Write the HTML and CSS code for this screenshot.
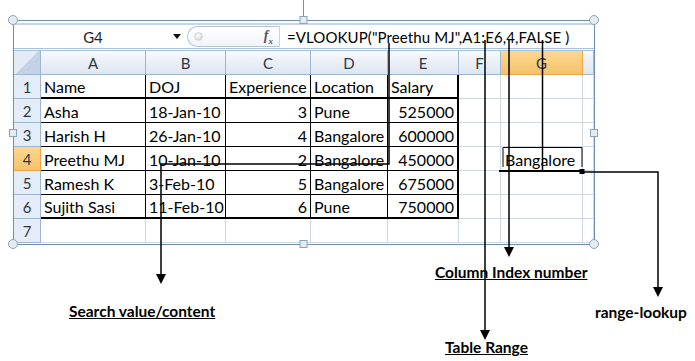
FILE: index.html
```html
<!DOCTYPE html>
<html lang="en">
<head>
  <meta charset="UTF-8">
  <title>VLOOKUP example</title>
  <link rel="stylesheet" href="styles.css">
</head>
<body>
  <div class="canvas">

    <div class="sheet">
      <!-- formula bar -->
      <div class="formula-bar">
        <div class="name-box">G4</div>
        <div class="name-drop"></div>
        <div class="fx-box">
          <span class="knob"></span>
          <span class="fx">f<sub>x</sub></span>
        </div>
        <div class="formula">=VLOOKUP("Preethu MJ",A1:E6,4,FALSE )</div>
      </div>

      <!-- cells -->
      <div class="grid">
        <div class="cell hd corner"></div>
        <div class="cell hd">A</div>
        <div class="cell hd">B</div>
        <div class="cell hd">C</div>
        <div class="cell hd">D</div>
        <div class="cell hd">E</div>
        <div class="cell hd">F</div>
        <div class="cell hd sel">G</div>
        <div class="cell hd"></div>

        <div class="cell rh">1</div>
        <div class="cell bk bt2">Name</div>
        <div class="cell bk bt2">DOJ</div>
        <div class="cell bk bt2">Experience</div>
        <div class="cell bk bt2">Location</div>
        <div class="cell bk2 bt2">Salary</div>
        <div class="cell"></div>
        <div class="cell"></div>
        <div class="cell"></div>

        <div class="cell rh">2</div>
        <div class="cell bk bt">Asha</div>
        <div class="cell bk bt">18-Jan-10</div>
        <div class="cell bk bt num">3</div>
        <div class="cell bk bt">Pune</div>
        <div class="cell bk2 bt num">525000</div>
        <div class="cell"></div>
        <div class="cell"></div>
        <div class="cell"></div>

        <div class="cell rh">3</div>
        <div class="cell bk bt">Harish H</div>
        <div class="cell bk bt">26-Jan-10</div>
        <div class="cell bk bt num">4</div>
        <div class="cell bk bt">Bangalore</div>
        <div class="cell bk2 bt num">600000</div>
        <div class="cell"></div>
        <div class="cell"></div>
        <div class="cell"></div>

        <div class="cell rh sel">4</div>
        <div class="cell bk bt">Preethu MJ</div>
        <div class="cell bk bt">10-Jan-10</div>
        <div class="cell bk bt num">2</div>
        <div class="cell bk bt">Bangalore</div>
        <div class="cell bk2 bt num">450000</div>
        <div class="cell"></div>
        <div class="cell result">Bangalore</div>
        <div class="cell"></div>

        <div class="cell rh">5</div>
        <div class="cell bk bt">Ramesh K</div>
        <div class="cell bk bt">3-Feb-10</div>
        <div class="cell bk bt num">5</div>
        <div class="cell bk bt">Bangalore</div>
        <div class="cell bk2 bt num">675000</div>
        <div class="cell"></div>
        <div class="cell"></div>
        <div class="cell"></div>

        <div class="cell rh">6</div>
        <div class="cell bk bt2">Sujith Sasi</div>
        <div class="cell bk bt2">11-Feb-10</div>
        <div class="cell bk bt2 num">6</div>
        <div class="cell bk bt2">Pune</div>
        <div class="cell bk2 bt2 num">750000</div>
        <div class="cell"></div>
        <div class="cell"></div>
        <div class="cell"></div>

        <div class="cell rh">7</div>
        <div class="cell"></div>
        <div class="cell"></div>
        <div class="cell"></div>
        <div class="cell"></div>
        <div class="cell"></div>
        <div class="cell"></div>
        <div class="cell"></div>
        <div class="cell"></div>
      </div>
    </div>

    <!-- selection handles + pointer lines -->
    <svg class="overlay" width="695" height="361" viewBox="0 0 695 361">
      <g class="handles">
        <line x1="303.5" y1="0" x2="303.5" y2="16" />
        <circle cx="13" cy="20" r="4.5" />
        <circle cx="594" cy="20" r="4.5" />
        <circle cx="13" cy="244" r="4.5" />
        <circle cx="594" cy="244" r="4.5" />
        <rect x="300" y="16.5" width="7" height="7" />
        <rect x="9.5" y="129.5" width="7" height="7" />
        <rect x="590.5" y="129.5" width="7" height="7" />
        <rect x="300" y="240.5" width="7" height="7" />
      </g>
      <g class="pointers">
        <!-- search value -->
        <polyline points="389,43 389,164 161,164 161,276" />
        <polygon points="156,274 166,274 161,284" />
        <!-- table range -->
        <line x1="485" y1="40" x2="485" y2="332" />
        <polygon points="480,330 490,330 485,340" />
        <!-- column index -->
        <line x1="509" y1="40" x2="509" y2="249" />
        <polygon points="504,247 514,247 509,257" />
        <!-- range lookup -->
        <line x1="542.5" y1="40" x2="542.5" y2="171" />
        <polyline points="582,172 658,172 658,289" />
        <polygon points="653,287 663,287 658,297" />
        <!-- result box -->
        <polyline class="thin" points="503,167 503,147.5 582,147.5 582,167" />
        <line class="thick" x1="499" y1="171" x2="582" y2="171" />
        <rect x="579.5" y="169" width="5" height="5" />
      </g>
    </svg>

    <span class="label lbl-search">Search value/content</span>
    <span class="label lbl-index">Column Index number</span>
    <span class="label lbl-lookup">range-lookup</span>
    <span class="label lbl-range">Table Range</span>

  </div>
</body>
</html>
```

FILE: styles.css
```css
body {
  margin: 0;
  background-color: #fff;
  font-family: 'Lato', 'Liberation Sans', sans-serif;
  color: #000;
}
.canvas {
  position: relative;
  width: 695px;
  height: 361px;
  overflow: hidden;
}

/* sheet frame */
.sheet {
  margin: 20px 0 0 13px;
  width: 580px;
  border: 1px solid #6f8db5;
  padding-bottom: 1px;
  background-color: #fff;
}
.formula-bar {
  display: flex;
  align-items: center;
  height: 23px;
  margin-top: 2px;
  border-top: 2px solid #c4d5ec;
  border-bottom: 3px double #a9c1e0;
}
.name-box {
  width: 158px;
  text-align: center;
  font-size: 15px;
  color: #222;
}
.name-drop {
  width: 0;
  height: 0;
  margin-left: 1px;
  border-left: 4px solid transparent;
  border-right: 4px solid transparent;
  border-top: 5px solid #111;
}
.fx-box {
  display: flex;
  align-items: center;
  justify-content: space-between;
  margin-left: 6px;
  width: 93px;
  height: 21px;
  box-sizing: border-box;
  padding: 0 6px 0 6px;
  border: 1px solid #b7c3d2;
  border-right-color: #c9d3df;
  border-radius: 11px 0 0 11px;
  background: linear-gradient(#ffffff, #f1f4f8);
}
.knob {
  width: 7px;
  height: 7px;
  border-radius: 50%;
  background: radial-gradient(circle at 40% 35%, #fff, #c3cad3);
  border: 1px solid #d2d8df;
}
.fx {
  font-family: 'Liberation Serif', serif;
  font-style: italic;
  font-weight: bold;
  font-size: 14px;
  color: #555;
}
.fx sub {
  font-size: 9px;
}
.formula {
  padding-left: 7px;
  font-size: 15px;
  letter-spacing: 0.1px;
  white-space: nowrap;
}

/* grid */
.grid {
  display: grid;
  grid-template-columns: 27px 105px 80px 85px 77px 71px 42px 82px 11px;
  grid-auto-rows: 24px;
}
.cell {
  box-sizing: border-box;
  display: flex;
  align-items: flex-end;
  padding: 0 3px 1px 3px;
  border-right: 1px solid #d0d7e5;
  border-bottom: 1px solid #d0d7e5;
  font-size: 16px;
  white-space: nowrap;
  overflow: hidden;
}
.hd {
  justify-content: center;
  align-items: center;
  padding: 0;
  font-size: 15px;
  color: #2d3743;
  background: linear-gradient(#f7f9fc, #dde6f1);
  border-right-color: #9eb6ce;
  border-bottom-color: #9eb6ce;
}
.corner {
  background: linear-gradient(135deg, #e3ebf5 50%, #c3d2e5 50%);
}
.rh {
  justify-content: center;
  align-items: center;
  padding: 0;
  font-size: 15px;
  color: #2d3743;
  background-color: #e4ecf7;
  border-right-color: #9eb6ce;
  border-bottom-color: #9eb6ce;
}
.sel {
  background: linear-gradient(#fbd891, #f5c26b);
  border-right-color: #f2a541;
  border-bottom-color: #f2a541;
}
.num {
  justify-content: flex-end;
}
.bk {
  border-right-color: #000;
}
.bk2 {
  border-right: 2px solid #000;
}
.bt {
  border-bottom-color: #000;
}
.bt2 {
  border-bottom: 2px solid #000;
}
.result {
  padding-left: 4px;
}

/* overlay */
.overlay {
  position: absolute;
  left: 0;
  top: 0;
  pointer-events: none;
}
.handles line {
  stroke: #7990b0;
  stroke-width: 1;
}
.handles circle {
  fill: #e4ecf3;
  stroke: #8ea3bb;
  stroke-width: 1;
}
.handles rect {
  fill: #e4ecf3;
  stroke: #8ea3bb;
  stroke-width: 1;
}
.pointers polyline,
.pointers line {
  fill: none;
  stroke: #000;
  stroke-width: 1.5;
}
.pointers polyline.thin {
  stroke-width: 1;
}
.pointers line.thick {
  stroke-width: 2;
}
.pointers polygon,
.pointers rect {
  fill: #000;
}

/* labels */
.label {
  position: absolute;
  font-weight: bold;
  font-size: 15.5px;
  line-height: 18px;
  white-space: nowrap;
}
.lbl-search {
  left: 69px;
  top: 302px;
  text-decoration: underline;
}
.lbl-index {
  left: 435px;
  top: 263px;
  text-decoration: underline;
}
.lbl-lookup {
  left: 595px;
  top: 303px;
}
.lbl-range {
  left: 445px;
  top: 338px;
  text-decoration: underline;
}
```
